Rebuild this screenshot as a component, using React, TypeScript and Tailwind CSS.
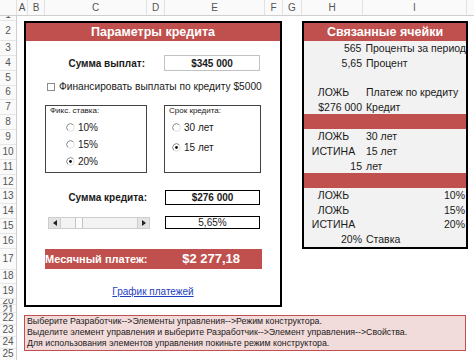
import React from 'react'

const COLS = [
  { label: '', w: 'w-[17px]' },
  { label: 'A', w: 'w-[11px]' },
  { label: 'B', w: 'w-[17px]' },
  { label: 'C', w: 'w-[102px]' },
  { label: 'D', w: 'w-[18px]' },
  { label: 'E', w: 'w-[100px]' },
  { label: 'F', w: 'w-[18px]' },
  { label: 'G', w: 'w-[19px]' },
  { label: 'H', w: 'w-[61px]' },
  { label: 'I', w: 'w-[104px]' },
  { label: '', w: 'w-[20px]' },
]

type RowNum = { n: number; h: string; pos?: string }

const ROWS: RowNum[] = [
  { n: 1, h: 'h-[5px]', pos: 'items-end' },
  { n: 2, h: 'h-[20px]' },
  ...Array.from({ length: 14 }, (_, i) => ({ n: i + 3, h: 'h-[14.857px]' })),
  { n: 17, h: 'h-[21px]' },
  { n: 18, h: 'h-[14px]' },
  { n: 19, h: 'h-[15px]' },
  { n: 20, h: 'h-[6px]' },
  { n: 21, h: 'h-[8px]', pos: 'items-start' },
  { n: 22, h: 'h-[12px]' },
  { n: 23, h: 'h-[12px]' },
  { n: 24, h: 'h-[12px]' },
  { n: 25, h: 'h-[14px]', pos: 'items-start' },
]

type Linked = { h?: string; hc?: boolean; i?: string; ir?: boolean; red?: boolean }

const LINKED: Linked[] = [
  { h: '565', i: 'Проценты за период' },
  { h: '5,65', i: 'Процент' },
  {},
  { h: 'ЛОЖЬ', hc: true, i: 'Платеж по кредиту' },
  { h: '$276 000', i: 'Кредит' },
  { red: true },
  { h: 'ЛОЖЬ', hc: true, i: '30 лет' },
  { h: 'ИСТИНА', hc: true, i: '15 лет' },
  { h: '15', i: 'лет' },
  { red: true },
  { h: 'ЛОЖЬ', hc: true, i: '10%', ir: true },
  { h: 'ЛОЖЬ', hc: true, i: '15%', ir: true },
  { h: 'ИСТИНА', hc: true, i: '20%', ir: true },
  { h: '20%', i: 'Ставка' },
]

function Radio({ checked }: { checked?: boolean }) {
  return (
    <svg width="9" height="9" viewBox="0 0 9 9" className="shrink-0">
      <circle cx="4.5" cy="4.5" r="3.8" fill="#fff" stroke="#dcdcdc" strokeWidth="0.9" />
      <path d="M1.8 7.2 A3.8 3.8 0 0 1 7.2 1.8" fill="none" stroke="#8a8a8a" strokeWidth="0.9" />
      {checked && <circle cx="4.5" cy="4.5" r="1.4" fill="#111" />}
    </svg>
  )
}

function Arrow({ dir }: { dir: 'l' | 'r' }) {
  return (
    <svg width="4" height="6" viewBox="0 0 4 6">
      <path d={dir === 'l' ? 'M4 0 L0 3 L4 6 Z' : 'M0 0 L4 3 L0 6 Z'} fill="#222" />
    </svg>
  )
}

function ScrollBar() {
  return (
    <div className="flex w-[102px] h-[12px] border border-[#cdcdcd] bg-[#f3f3f3]">
      <div className="w-[12px] flex items-center justify-center bg-[#e4e4e4] border-r border-[#cdcdcd]">
        <Arrow dir="l" />
      </div>
      <div className="flex-1 flex">
        <div className="ml-[14px] w-[8px] h-full bg-[#fbfbfb] border-x border-[#c4c4c4]" />
      </div>
      <div className="w-[12px] flex items-center justify-center bg-[#e4e4e4] border-l border-[#cdcdcd]">
        <Arrow dir="r" />
      </div>
    </div>
  )
}

function LeftPanel() {
  return (
    <div className="ml-[7px] w-[258px] h-[286px] border-2 border-black flex flex-col text-[#1a1a1a]">
      <div className="h-[18px] bg-[#c0504d] flex items-center justify-center text-white font-bold text-[12.5px]">
        Параметры кредита
      </div>

      <div className="mt-[14px] h-[16px] flex items-center">
        <div className="w-[119px] text-right font-bold text-[10px]">Сумма выплат:</div>
        <div className="ml-[19px] w-[96px] h-[16px] border border-[#c2c2c2] flex items-center justify-center font-bold text-[10px]">
          $345 000
        </div>
      </div>

      <div className="mt-[11px] h-[10px] flex items-center pl-[21px]">
        <div className="w-[8px] h-[8px] border border-[#8a8a8a] bg-white" />
        <span className="ml-[4px] text-[10.2px] whitespace-nowrap">Финансировать выплаты по кредиту $5000</span>
      </div>

      <div className="mt-[13px] h-[68px] flex pl-[19px]">
        <div className="w-[102px] h-full border border-[#444] flex flex-col">
          <div className="h-[10px] pl-[4px] text-[8px] leading-[10px]">Фикс. ставка:</div>
          <div className="mt-[3px] flex flex-col pl-[20px] text-[10px]">
            <div className="h-[17px] flex items-center gap-[3px]"><Radio />10%</div>
            <div className="h-[17px] flex items-center gap-[3px]"><Radio />15%</div>
            <div className="h-[17px] flex items-center gap-[3px]"><Radio checked />20%</div>
          </div>
        </div>
        <div className="ml-[17px] w-[97px] h-full border border-[#444] flex flex-col">
          <div className="h-[10px] pl-[4px] text-[8px] leading-[10px]">Срок кредита:</div>
          <div className="mt-[1px] flex flex-col pl-[7px] text-[10px]">
            <div className="h-[20px] flex items-center gap-[3px]"><Radio />30 лет</div>
            <div className="h-[20px] flex items-center gap-[3px]"><Radio checked />15 лет</div>
          </div>
        </div>
      </div>

      <div className="mt-[17px] h-[15px] flex items-center">
        <div className="w-[121px] text-right font-bold text-[10px]">Сумма кредита:</div>
        <div className="ml-[18px] w-[95px] h-[15px] border border-black flex items-center justify-center font-bold text-[10px]">
          $276 000
        </div>
      </div>

      <div className="mt-[11px] h-[13px] flex items-center pl-[22px]">
        <ScrollBar />
        <div className="ml-[15px] w-[95px] h-[13px] border border-black flex items-center justify-center text-[10px]">
          5,65%
        </div>
      </div>

      <div className="mt-[20px] ml-[19px] w-[217px] h-[20px] bg-[#c0504d] flex items-center text-white font-bold">
        <span className="text-[11px]">Месячный платеж:</span>
        <span className="ml-auto pr-[22px] text-[13px]">$2 277,18</span>
      </div>

      <div className="mt-[15px] h-[15px] flex items-center justify-center">
        <span className="text-[10px] text-[#1f3fbf] underline">График платежей</span>
      </div>
    </div>
  )
}

function RightPanel() {
  return (
    <div className="ml-[20px] w-[166px] h-[228px] border-2 border-black flex flex-col bg-[#f2f2f2] text-[#1a1a1a]">
      <div className="h-[18px] bg-[#c0504d] flex items-center justify-center text-white font-bold text-[12.5px]">
        Связанные ячейки
      </div>
      {LINKED.map((r, idx) =>
        r.red ? (
          <div key={idx} className="h-[14.7px] bg-[#c0504d]" />
        ) : (
          <div key={idx} className="h-[14.7px] flex items-center text-[10.5px] leading-none">
            <div className={`w-[59px] ${r.hc ? 'text-center' : 'text-right pr-[1px]'}`}>{r.h}</div>
            <div className={`flex-1 whitespace-nowrap ${r.ir ? 'text-right pr-[1px]' : 'pl-[3px]'}`}>{r.i}</div>
          </div>
        )
      )}
    </div>
  )
}

export default function App() {
  return (
    <div className="w-[474px] h-[360px] overflow-hidden bg-white font-['Liberation_Sans',Arial,sans-serif]">
      <div className="flex h-[16px] border-b border-[#cfcfcf] bg-[#fafafa]">
        {COLS.map((c, i) => (
          <div
            key={i}
            className={`${c.w} shrink-0 flex items-center justify-center border-r border-[#e1e1e1] text-[10px] text-[#555]`}
          >
            {c.label}
          </div>
        ))}
      </div>

      <div className="flex">
        <div className="w-[17px] shrink-0 flex flex-col border-r border-[#cfcfcf] bg-[#fafafa]">
          {ROWS.map((r) => (
            <div
              key={r.n}
              className={`${r.h} shrink-0 overflow-hidden flex justify-center ${r.pos ?? 'items-center'} border-b border-[#e6e6e6] text-[10px] leading-none text-[#555]`}
            >
              {r.n}
            </div>
          ))}
        </div>

        <div className="flex-1 flex flex-col">
          <div className="flex items-start pt-[5px]">
            <LeftPanel />
            <RightPanel />
          </div>
          <div className="mt-[8px] ml-[7px] w-[442px] h-[36px] border border-[#c0504d] bg-[#f2dcdb] px-[2px] text-[8.8px] leading-[11px] text-[#1a1a1a] whitespace-nowrap">
            <div>Выберите Разработчик--&gt;Элементы управления--&gt;Режим конструктора.</div>
            <div>Выделите элемент управления и выберите Разработчик--&gt;Элемент управления--&gt;Свойства.</div>
            <div>Для использования элементов управления покиньте режим конструктора.</div>
          </div>
        </div>
      </div>
    </div>
  )
}
